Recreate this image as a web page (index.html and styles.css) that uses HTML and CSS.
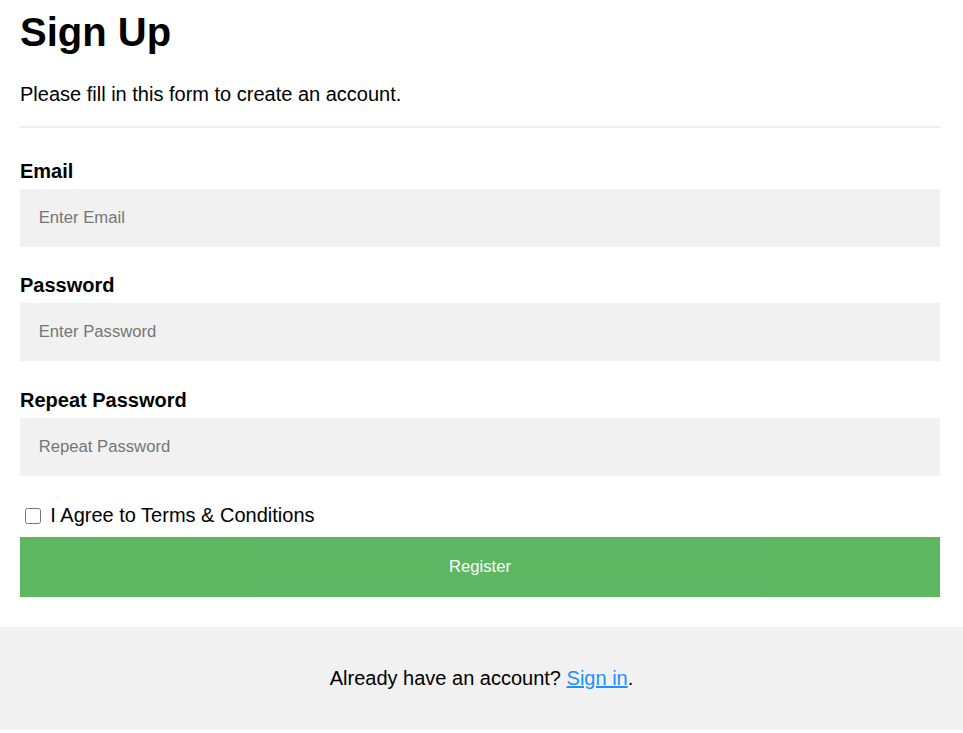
FILE: index.html
```html
<!DOCTYPE html>
<html>
<head>
<meta charset="utf-8">
<link rel="stylesheet" href="styles.css">
</head>
<body>
<form class="signup">
  <div class="container">
    <h1 class="title">Sign Up</h1>
    <p class="intro">Please fill in this form to create an account.</p>
    <hr class="divider">
    <label class="field-label" for="email">Email</label>
    <input class="field" type="text" id="email" placeholder="Enter Email">
    <label class="field-label" for="psw">Password</label>
    <input class="field" type="password" id="psw" placeholder="Enter Password">
    <label class="field-label" for="psw-repeat">Repeat Password</label>
    <input class="field" type="password" id="psw-repeat" placeholder="Repeat Password">
    <label class="agree"><input class="check" type="checkbox"> I Agree to Terms &amp; Conditions</label>
    <button class="register" type="button">Register</button>
  </div>
  <div class="signin">
    <p class="signin-text">Already have an account? <a class="link" href="#">Sign in</a>.</p>
  </div>
</form>
</body>
</html>
```
FILE: styles.css
```css
* { box-sizing: border-box; }
html, body { margin: 0; padding: 0; background: #fff; }
body { font-family: "Liberation Sans", Arial, sans-serif; color: #000; }

.container { padding: 9px 23px 20px 20px; }

.title {
  margin: 0 0 27.8px;
  font-size: 40px;
  line-height: 46px;
  font-weight: bold;
}
.intro {
  margin: 0 0 20.5px;
  font-size: 20px;
  line-height: 23px;
}
.divider {
  margin: 0 0 31.25px;
  height: 0;
  border: 1px solid #eeeeee;
}
.field-label {
  display: block;
  font-size: 20px;
  line-height: 23px;
  font-weight: bold;
}
.field {
  display: block;
  width: 100%;
  height: 58px;
  padding: 0 18.75px;
  margin: 6px 0 27.5px;
  border: none;
  outline: none;
  background: #f1f1f1;
  font-family: "Liberation Sans", Arial, sans-serif;
  font-size: 16.67px;
  color: #000;
}
.field::placeholder { color: #757575; opacity: 1; }

.agree {
  display: block;
  padding-top: 1px;
  font-size: 20px;
  line-height: 23px;
}
.check {
  width: 16px;
  height: 16px;
  margin: 0 3.75px 0 5px;
  vertical-align: -2px;
}
.register {
  display: block;
  width: 100%;
  height: 60px;
  margin: 10px 0;
  border: none;
  padding: 0;
  background: #4CAF50;
  opacity: 0.9;
  color: #fff;
  font-family: "Liberation Sans", Arial, sans-serif;
  font-size: 16.67px;
  cursor: pointer;
}

.signin {
  background: #f1f1f1;
  text-align: center;
  padding: 20px;
  height: 103px;
}
.signin-text {
  margin: 20px 0;
  font-size: 20px;
  line-height: 23px;
}
.link { color: dodgerblue; text-decoration: underline; }
```
